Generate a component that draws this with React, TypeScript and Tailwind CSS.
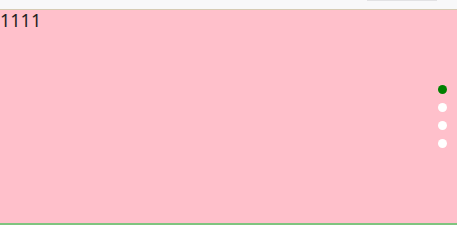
export default function App() {
  const dots = [0, 1, 2, 3];
  const active = 0;

  return (
    <div className="w-[457px] h-[242px] bg-white font-['Liberation_Sans',sans-serif]">
      <div className="h-[10px] bg-[#f8f8f9] border-b border-[#d6cbb3] flex justify-end pr-[20px]">
        <div className="w-[70px] h-[1px] bg-[#e2e2e4]" />
      </div>
      <div className="relative h-[215px] bg-[#ffc0cb] border-b-2 border-[#7fc47f]">
        <div className="font-['Noto_Sans',sans-serif] text-[18px] leading-[20px] text-[#1f1f1f]">1111</div>
        <div className="absolute right-[10px] top-0 bottom-0 flex flex-col justify-center gap-[9px]">
          {dots.map((d) => (
            <span
              key={d}
              className={`block w-[9px] h-[9px] rounded-full ${d === active ? "bg-[#008000]" : "bg-white"}`}
            />
          ))}
        </div>
      </div>
    </div>
  );
}
